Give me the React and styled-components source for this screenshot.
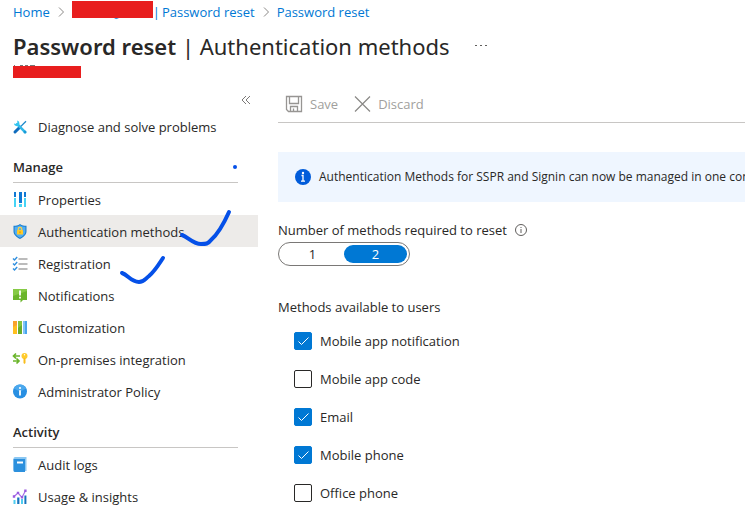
import React, { useState } from 'react';
import styled, { createGlobalStyle, ThemeProvider } from 'styled-components';

const theme = {
  color: '#292827',
  linkColor: '#0078d4',
  mutedColor: '#a19f9d',
  lineColor: '#c8c6c4',
  activeColor: '#edebe9',
  inkColor: '#0550e8',
  redactColor: '#e81e1e',
};

const GlobalStyle = createGlobalStyle`
  * {
    box-sizing: border-box;
  }

  body {
    margin: 0;
    background: #fff;
    color: ${theme.color};
    font-family: 'Open Sans', 'Noto Sans', sans-serif;
    font-size: 13px;
    line-height: 20px;
  }

  button,
  input {
    font: inherit;
    color: inherit;
    margin: 0;
  }

  svg {
    display: block;
    flex: none;
  }
`;

const Page = styled.div`
  overflow: hidden;
`;

const Breadcrumb = styled.nav`
  display: flex;
  align-items: center;
  height: 24px;
  padding-left: 13px;
  white-space: nowrap;

  a {
    color: ${({ theme }) => theme.linkColor};
    text-decoration: none;
  }

  a:hover {
    text-decoration: underline;
  }
`;

const Separator = styled.svg`
  margin: 0 7px;
`;

const CrumbRedaction = styled.svg`
  align-self: flex-start;
`;

const CrumbBar = styled.span`
  margin-right: 2px;
  color: ${({ theme }) => theme.linkColor};
`;

const TitleRow = styled.header`
  display: flex;
  align-items: center;
  height: 41px;
  padding: 2px 0 0 13px;
  white-space: nowrap;
`;

const Title = styled.h1`
  margin: 0;
  font-family: 'Noto Sans', 'Open Sans', sans-serif;
  font-size: 22px;
  line-height: 32px;
  font-weight: 400;

  strong {
    font-weight: 600;
  }
`;

const MoreButton = styled.button`
  margin-left: 24px;
  padding: 0;
  border: 0;
  background: none;
`;

const TenantRedaction = styled.svg`
  margin-left: 13px;
`;

const Body = styled.div`
  display: flex;
`;

const Sidebar = styled.aside`
  flex: 0 0 258px;
`;

const CollapseRow = styled.div`
  display: flex;
  justify-content: flex-end;
  height: 31px;
  padding: 15px 7px 0 0;
`;

const IconButton = styled.button`
  display: flex;
  width: 10px;
  height: 12px;
  padding: 0;
  border: 0;
  background: none;
`;

const NavList = styled.ul`
  margin: 0;
  padding: 0;
  list-style: none;
`;

const NavLink = styled.a`
  position: relative;
  display: flex;
  align-items: center;
  gap: 10px;
  height: 32px;
  padding: 2px 0 0 12px;
  color: inherit;
  text-decoration: none;
  background: ${({ $active, theme }) => ($active ? theme.activeColor : 'none')};

  :hover {
    text-decoration: underline;
  }
`;

const GroupTitle = styled.h2`
  display: flex;
  align-items: center;
  justify-content: space-between;
  height: 41px;
  margin: 0 20px 0 13px;
  padding-top: 10px;
  border-bottom: 1px solid ${({ theme }) => theme.lineColor};
  font-size: 13px;
  font-weight: 600;
`;

const Dot = styled.span`
  width: 4px;
  height: 4px;
  margin-right: 1px;
  border-radius: 50%;
  background: ${({ theme }) => theme.inkColor};
`;

// Pen stroke that runs over the neighbouring rows
const PenMark = styled.svg`
  position: absolute;
  left: ${({ $left }) => $left}px;
  top: ${({ $top }) => $top}px;
  z-index: 1;
  pointer-events: none;
`;

const Main = styled.main`
  flex: 1;
  min-width: 0;
  padding: 6px 0 0 20px;
`;

const Toolbar = styled.div`
  display: flex;
  gap: 16px;
  height: 38px;
  padding-left: 7px;
  border-bottom: 1px solid ${({ theme }) => theme.lineColor};
`;

const ToolButton = styled.button`
  display: flex;
  align-items: center;
  gap: 7px;
  height: 38px;
  padding: 0;
  border: 0;
  background: none;
  color: ${({ theme }) => theme.mutedColor};
`;

const Banner = styled.div`
  display: flex;
  align-items: center;
  gap: 8px;
  height: 50px;
  margin-top: 29px;
  padding-left: 17px;
  overflow: hidden;
  background: #eff6ff;
  font-size: 12px;
  white-space: nowrap;
`;

const Fieldset = styled.fieldset`
  min-width: 0;
  margin: ${({ $space }) => $space}px 0 0;
  padding: 0;
  border: 0;
`;

const Legend = styled.legend`
  display: flex;
  align-items: center;
  gap: 8px;
  padding: 0;
`;

const Toggle = styled.div`
  display: flex;
  width: 132px;
  height: 24px;
  margin-top: 2px;
  padding: 2px;
  border: 1px solid #7a7876;
  border-radius: 12px;
`;

const ToggleOption = styled.label`
  flex: 1;
  height: 18px;
  border-radius: 9px;
  line-height: 19px;
  text-align: center;
  color: ${({ $on, theme }) => ($on ? '#fff' : theme.color)};
  background: ${({ $on, theme }) => ($on ? theme.linkColor : 'none')};

  input {
    position: absolute;
    opacity: 0;
  }
`;

const CheckList = styled.div`
  display: grid;
  gap: 18px;
  margin-top: 14px;
  padding-left: 16px;
`;

const CheckLabel = styled.label`
  display: flex;
  align-items: center;
  gap: 8px;
  width: fit-content;
`;

const CheckBox = styled.span`
  display: grid;

  input,
  svg {
    grid-area: 1 / 1;
  }

  svg {
    pointer-events: none;
  }

  input {
    appearance: none;
    width: 18px;
    height: 18px;
    border: 1px solid ${({ theme }) => theme.color};
    border-radius: 2px;
  }

  input:checked {
    border-color: ${({ theme }) => theme.linkColor};
    background: ${({ theme }) => theme.linkColor};
  }
`;

const icons = {
  tools: (
    <>
      <path d="M14 2.2 7.6 8.6" stroke="#1b87c9" strokeWidth="1.3" />
      <path d="M7.8 8.2 3 13" stroke="#0f6cbd" strokeWidth="3" strokeLinecap="round" />
      <path d="m5.2 5.2 7.9 7.9" stroke="#32b8e8" strokeWidth="2.6" strokeLinecap="round" />
      <path d="M2 4.4a3 3 0 0 0 4.3 2.5A3 3 0 0 0 5.2 1.6L5.4 4l-1.2.9Z" fill="#32c5f0" />
      <circle cx="13" cy="13" r="1.5" fill="#199bd7" />
    </>
  ),
  properties: (
    <>
      <path d="M2 0h2v5H2zM7 0h3v11H7zM12 0h2v5h-2z" fill="#0f78d4" />
      <path d="M2 6h2v9H2zM7 12h3v3H7zM12 6h2v9h-2z" fill="#45d4f5" />
    </>
  ),
  shield: (
    <>
      <path d="M8 0c2 1.600 4.200 1.700 6.500 1.800V7.500c0 3.600-3.800 6-6.500 7.500C5.300 13.500 1.500 11.100 1.500 7.500V1.800C3.800 1.700 6 1.600 8 0Z" fill="#1b7fd0" />
      <path d="M8 1.200c1.700 1.200 3.500 1.400 5.400 1.500v4.800c0 2.900-3.100 5-5.400 6.300-2.300-1.300-5.400-3.400-5.400-6.300V2.700C4.500 2.600 6.300 2.400 8 1.200Z" fill="#54aef0" />
      <path d="M6.300 6.500V5a1.700 1.700 0 0 1 3.400 0v1.500" fill="none" stroke="#ffd23e" strokeWidth="1.200" />
      <rect x="5" y="6" width="6" height="4.600" rx=".6" fill="#ffca28" />
      <path d="M8 7.400v1.800" stroke="#d18b00" />
    </>
  ),
  registration: (
    <>
      <path d="M6.500 3h9M6.500 8h9M6.500 13h9" stroke="#a5a5a5" strokeWidth="1.300" />
      <path d="m1 2.500 1.500 1.500L5.200 1M1 7.500l1.500 1.500L5.200 6M1 12.500l1.500 1.500 2.700-3" fill="none" stroke="#2f8fdf" strokeWidth="1.400" />
    </>
  ),
  notifications: (
    <>
      <path d="M1 1h14v11h-4l-2.500 2.500V12H1z" fill="#6bb52b" />
      <path d="M1 1h14v2L1 8z" fill="#86ca45" />
      <path d="M8 2.500V7.500M8 8.800v1.700" stroke="#fff" strokeWidth="1.800" />
    </>
  ),
  customization: (
    <>
      <path d="M1 1h4v13H1z" fill="#ffbf1f" />
      <path d="M1 1h4v4L1 7z" fill="#f9a22b" />
      <path d="M6 1h4v13H6z" fill="#67ad2d" />
      <path d="M6 1h4v4L6 8z" fill="#83c340" />
      <path d="M11 1h4v13h-4z" fill="#4aa5ed" />
      <path d="M11 1h2v13h-2z" fill="#84c5f7" />
    </>
  ),
  integration: (
    <>
      <path d="M8 4H2M4 1.500 1.500 4 4 6.500M1 9h6M4.500 6.500 7 9l-2.500 2.500" fill="none" stroke="#6bb52b" strokeWidth="1.700" />
      <circle cx="12.500" cy="4" r="3" fill="#ffcb2b" />
      <path d="M11.500 6h2v5l-1 1-1-1z" fill="#f9bd1d" />
      <circle cx="12.500" cy="2.800" r=".7" fill="#fff" />
    </>
  ),
  info: (
    <>
      <circle cx="8" cy="7.500" r="7" fill="#288fe2" />
      <path d="M1.700 4.500a7 7 0 0 1 12.600 0L8 7.500z" fill="#4ba8ed" />
      <circle cx="8" cy="4" r="1.100" fill="#fff" />
      <path d="M8 6.300V11.500" stroke="#fff" strokeWidth="1.800" />
    </>
  ),
  book: (
    <>
      <path d="M3 0h11.500v14H3a1.500 1.500 0 0 1-1.500-1.500v-11A1.500 1.500 0 0 1 3 0Z" fill="#8bc7f2" />
      <path d="M1.500 2H13v13H3a1.500 1.500 0 0 1-1.500-1.500z" fill="#2c90dd" />
      <path d="M5 4.500h6v2H5z" fill="#fff" />
    </>
  ),
  chart: (
    <>
      <path d="M1.500 11h2v4h-2zM9 10h2v5H9z" fill="#4fcdf0" />
      <path d="M5.200 8.500h2.200V15H5.200zM12.400 6.500h2V15h-2z" fill="#1673bd" />
      <path d="m2 7.500 4-3.500 4 4.300 3.500-6.600" fill="none" stroke="#a66ee8" strokeWidth="1.200" />
      <path d="M.8 6.300h2.400v2.400H.8zM4.800 2.700h2.400v2.400H4.800zM8.800 7h2.400v2.400H8.800zM12.200.5h2.400v2.400h-2.400z" fill="#9b5be0" />
    </>
  ),
};

const groups = [
  { items: [{ label: 'Diagnose and solve problems', icon: 'tools' }] },
  {
    title: 'Manage',
    dot: true,
    items: [
      { label: 'Properties', icon: 'properties' },
      { label: 'Authentication methods', icon: 'shield', active: true, mark: 'large' },
      { label: 'Registration', icon: 'registration', mark: 'small' },
      { label: 'Notifications', icon: 'notifications' },
      { label: 'Customization', icon: 'customization' },
      { label: 'On-premises integration', icon: 'integration' },
      { label: 'Administrator Policy', icon: 'info' },
    ],
  },
  {
    title: 'Activity',
    items: [
      { label: 'Audit logs', icon: 'book' },
      { label: 'Usage & insights', icon: 'chart' },
    ],
  },
];

const marks = {
  large: { left: 178, top: -6, d: 'M4 26C10 28 15 35 23 35C28 35 30 35 33 31C41 24 47 12 51 3' },
  small: { left: 118, top: 6, d: 'M4 20C10 22 13 29 21 29C26 29 27 26 31 23C37 18 41 11 45 5' },
};

const Mark = ({ name }) => {
  const { left, top, d } = marks[name];

  return (
    <PenMark $left={left} $top={top} width="56" height="40" aria-hidden="true">
      <path
        d={d}
        fill="none"
        stroke={theme.inkColor}
        strokeWidth="4"
        strokeLinecap="round"
        strokeLinejoin="round"
      />
    </PenMark>
  );
};

const NavItem = ({ label, icon, active, mark }) => (
  <li>
    <NavLink href="#" $active={active} aria-current={active ? 'page' : undefined}>
      <svg width="16" height="16" viewBox="0 0 16 16" aria-hidden="true">
        {icons[icon]}
      </svg>
      {label}
      {mark && <Mark name={mark} />}
    </NavLink>
  </li>
);

const Chevron = () => (
  <Separator width="8" height="10" viewBox="0 0 8 10" aria-hidden="true">
    <path d="m2 .5 4.500 4.500L2 9.500" fill="none" stroke="#8a8886" />
  </Separator>
);

const Method = ({ label, checked, onChange }) => (
  <CheckLabel>
    <CheckBox>
      <input type="checkbox" checked={checked} onChange={onChange} />
      {checked && (
        <svg width="18" height="18" viewBox="0 0 18 18" aria-hidden="true">
          <path d="m4.500 9.500 3 3 7-7" fill="none" stroke="#fff" />
        </svg>
      )}
    </CheckBox>
    {label}
  </CheckLabel>
);

function App() {
  const [required, setRequired] = useState(2);
  const [methods, setMethods] = useState({
    'Mobile app notification': true,
    'Mobile app code': false,
    Email: true,
    'Mobile phone': true,
    'Office phone': false,
  });

  return (
    <ThemeProvider theme={theme}>
      <GlobalStyle />
      <Page>
        <Breadcrumb aria-label="Breadcrumb">
          <a href="#">Home</a>
          <Chevron />
          <CrumbRedaction width="81" height="21" aria-hidden="true">
            <path d="M42 17.500q2 2 5 0" fill="none" stroke={theme.linkColor} />
            <path d="M0 1h81v17H0z" fill={theme.redactColor} />
          </CrumbRedaction>
          <CrumbBar>|</CrumbBar>
          <a href="#">Password reset</a>
          <Chevron />
          <a href="#">Password reset</a>
        </Breadcrumb>
        <TitleRow>
          <Title>
            <strong>Password reset</strong> | Authentication methods
          </Title>
          <MoreButton aria-label="More">
            <svg width="14" height="4" viewBox="0 0 14 4">
              <path d="M1 1h2v1H1zM6 1h2v1H6zM11 1h2v1h-2z" fill="#605e5c" />
            </svg>
          </MoreButton>
        </TitleRow>
        <TenantRedaction width="68" height="14" aria-hidden="true">
          <path d="M1 .5h1M7 .5h3M12 .5h3M17 .5h5" stroke="#777" />
          <path d="M0 1h68v12H0z" fill={theme.redactColor} />
        </TenantRedaction>

        <Body>
          <Sidebar>
            <CollapseRow>
              <IconButton aria-label="Collapse menu">
                <svg width="10" height="12" viewBox="0 0 10 12">
                  <path d="M5 2 1 6l4 4M9 2 5 6l4 4" fill="none" stroke="#7a7876" />
                </svg>
              </IconButton>
            </CollapseRow>
            {groups.map(({ title, dot, items }) => (
              <React.Fragment key={title || 'top'}>
                {title && (
                  <GroupTitle>
                    {title}
                    {dot && <Dot />}
                  </GroupTitle>
                )}
                <NavList>
                  {items.map((item) => (
                    <NavItem key={item.label} {...item} />
                  ))}
                </NavList>
              </React.Fragment>
            ))}
          </Sidebar>

          <Main>
            <Toolbar>
              <ToolButton disabled>
                <svg width="18" height="18" viewBox="0 0 18 18" aria-hidden="true">
                  <path
                    d="M1.500 1.500h15v15h-13l-2-2zM4.500 1.500v7h9v-7M5.500 16.500v-5h7v5M8.500 13.500v3"
                    fill="none"
                    stroke="#979593"
                    strokeWidth="1.300"
                  />
                </svg>
                Save
              </ToolButton>
              <ToolButton disabled>
                <svg width="17" height="18" viewBox="0 0 17 18" aria-hidden="true">
                  <path d="m1 1.500 15 15M16 1.500l-15 15" stroke="#8a8886" strokeWidth="1.200" />
                </svg>
                Discard
              </ToolButton>
            </Toolbar>

            <Banner>
              <svg width="16" height="16" viewBox="0 0 16 16" aria-hidden="true">
                <circle cx="8" cy="8" r="8" fill="#015cda" />
                <circle cx="8" cy="4" r="1.200" fill="#fff" />
                <path d="M6.500 6.500H8V12M6 12.200h4" fill="none" stroke="#fff" strokeWidth="1.300" />
              </svg>
              Authentication Methods for SSPR and Signin can now be managed in one converged policy.
            </Banner>

            <Fieldset $space={18}>
              <Legend>
                Number of methods required to reset
                <svg width="12" height="12" viewBox="0 0 12 12" aria-hidden="true">
                  <circle cx="6" cy="6" r="5.500" fill="none" stroke="#605e5c" />
                  <path d="M6 3v1M6 5v4" stroke="#605e5c" />
                </svg>
              </Legend>
              <Toggle>
                {[1, 2].map((n) => (
                  <ToggleOption key={n} $on={required === n}>
                    <input
                      type="radio"
                      name="required"
                      checked={required === n}
                      onChange={() => setRequired(n)}
                    />
                    {n}
                  </ToggleOption>
                ))}
              </Toggle>
            </Fieldset>

            <Fieldset $space={31}>
              <Legend>Methods available to users</Legend>
              <CheckList>
                {Object.keys(methods).map((name) => (
                  <Method
                    key={name}
                    label={name}
                    checked={methods[name]}
                    onChange={() => setMethods({ ...methods, [name]: !methods[name] })}
                  />
                ))}
              </CheckList>
            </Fieldset>
          </Main>
        </Body>
      </Page>
    </ThemeProvider>
  );
}

export default App;
